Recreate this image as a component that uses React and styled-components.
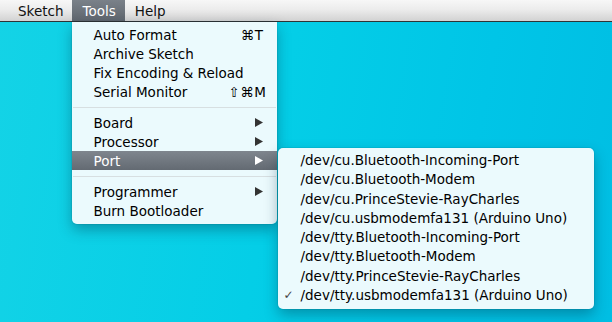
import styled, { createGlobalStyle } from 'styled-components';

const GlobalStyle = createGlobalStyle`
	html, body {
		margin: 0;
		padding: 0;
		width: 612px;
		height: 322px;
		overflow: hidden;
	}
	body {
		font-family: "DejaVu Sans", "Liberation Sans", sans-serif;
		font-size: 13.5px;
		-webkit-font-smoothing: antialiased;
	}
`;

const Desktop = styled.div`
	position: relative;
	width: 612px;
	height: 322px;
	background:
		linear-gradient(180deg, rgba(0, 70, 90, 0.45) 0px, rgba(0, 70, 90, 0) 7px),
		linear-gradient(100deg, #14d3e6 0%, #04cee7 45%, #00c5e7 75%, #00bee3 100%);
`;

const MenuBar = styled.div`
	display: flex;
	height: 21px;
	padding-left: 8px;
	background: linear-gradient(180deg, #f7f7f7 0%, #ececec 45%, #d2d2d2 100%);
	border-bottom: 1px solid #2e3436;
`;

const BarItem = styled.div`
	position: relative;
	display: flex;
	align-items: center;
	padding: 0 9px 0 10px;
	color: ${(p) => (p.$open ? '#fff' : '#111')};
	background: ${(p) => (p.$open ? 'linear-gradient(180deg, #7a8189 0%, #5f666e 100%)' : 'none')};
	cursor: default;
`;

const Dropdown = styled.div`
	position: absolute;
	top: 22px;
	left: 0;
	width: 205px;
	padding: 3px 0 4px;
	background: rgba(240, 251, 253, 0.98);
	border-radius: 0 0 5px 5px;
	box-shadow: 0 6px 14px rgba(0, 40, 60, 0.35), 0 0 0 1px rgba(0, 0, 0, 0.06);
	z-index: 10;
`;

const Row = styled.div`
	position: relative;
	display: flex;
	align-items: center;
	justify-content: space-between;
	height: 19px;
	padding: 0 ${(p) => p.$right || 14}px 0 21px;
	color: ${(p) => (p.$active ? '#fff' : '#000')};
	background: ${(p) => (p.$active ? 'linear-gradient(180deg, #7f868e 0%, #636a72 100%)' : 'none')};
	white-space: nowrap;
`;

const Shortcut = styled.span`
	letter-spacing: 0.5px;
`;

const Separator = styled.div`
	height: 12px;
	display: flex;
	align-items: center;
	&::after {
		content: '';
		flex: 1;
		height: 1px;
		margin: 0 1px;
		background: #d7dfe1;
	}
`;

const Submenu = styled.div`
	position: absolute;
	top: -3px;
	left: 100%;
	margin-left: 1px;
	width: 316px;
	padding: 3px 0 4px;
	background: rgba(240, 251, 253, 0.98);
	border-radius: 5px;
	box-shadow: 0 6px 14px rgba(0, 40, 60, 0.35), 0 0 0 1px rgba(0, 0, 0, 0.06);
`;

const PortRow = styled.div`
	position: relative;
	height: 19.3px;
	line-height: 19.3px;
	padding-left: 22px;
	color: #000;
	white-space: nowrap;
`;

const Check = styled.span`
	position: absolute;
	left: 5px;
	top: 0;
	color: #444;
	font-size: 12px;
`;

const Arrow = ({ color }) => (
	<svg width="8" height="9" viewBox="0 0 8 9">
		<polygon points="0,0 8,4.5 0,9" fill={color} />
	</svg>
);

const ports = [
	'/dev/cu.Bluetooth-Incoming-Port',
	'/dev/cu.Bluetooth-Modem',
	'/dev/cu.PrinceStevie-RayCharles',
	'/dev/cu.usbmodemfa131 (Arduino Uno)',
	'/dev/tty.Bluetooth-Incoming-Port',
	'/dev/tty.Bluetooth-Modem',
	'/dev/tty.PrinceStevie-RayCharles',
	'/dev/tty.usbmodemfa131 (Arduino Uno)',
];

export default function App() {
	return (
		<Desktop>
			<GlobalStyle />
			<MenuBar>
				<BarItem>Sketch</BarItem>
				<BarItem $open>
					Tools
					<Dropdown>
						<Row>
							Auto Format<Shortcut>⌘T</Shortcut>
						</Row>
						<Row>Archive Sketch</Row>
						<Row>Fix Encoding &amp; Reload</Row>
						<Row $right={11}>
							Serial Monitor<Shortcut>⇧⌘M</Shortcut>
						</Row>
						<Separator />
						<Row>
							Board <Arrow color="#333" />
						</Row>
						<Row>
							Processor <Arrow color="#333" />
						</Row>
						<Row $active>
							Port <Arrow color="#fff" />
							<Submenu>
								{ports.map((p, i) => (
									<PortRow key={p}>
										{i === ports.length - 1 && <Check>✓</Check>}
										{p}
									</PortRow>
								))}
							</Submenu>
						</Row>
						<Separator />
						<Row>
							Programmer <Arrow color="#333" />
						</Row>
						<Row>Burn Bootloader</Row>
					</Dropdown>
				</BarItem>
				<BarItem>Help</BarItem>
			</MenuBar>
		</Desktop>
	);
}
